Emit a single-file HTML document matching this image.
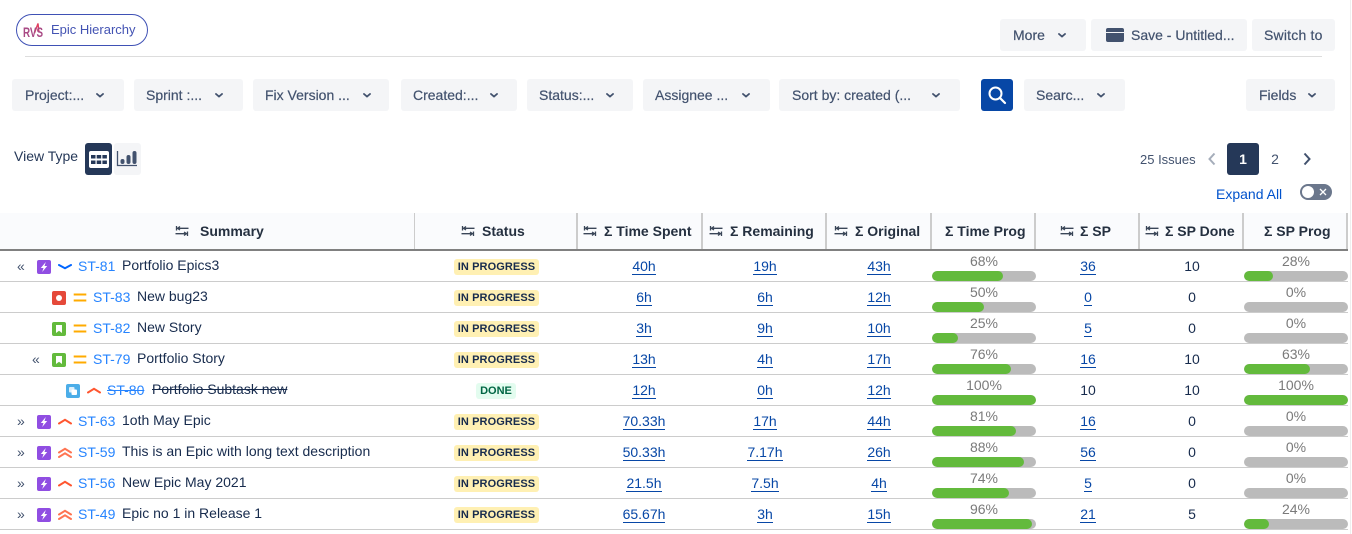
<!DOCTYPE html>
<html><head><meta charset="utf-8"><style>
html,body{margin:0;padding:0;width:1352px;height:534px;overflow:hidden;background:#fff;font-family:"Liberation Sans",sans-serif;color:#172b4d}
.a{position:absolute;white-space:nowrap}
.b{position:absolute;height:32px;line-height:32px;background:#f4f5f7;border-radius:3px;color:#42526e;font-size:14px;white-space:nowrap;box-sizing:border-box;-webkit-text-stroke:.2px #42526e}
.b span{position:absolute;left:13px;top:0}
.b svg{position:absolute;top:14px}
.hd{position:absolute;left:0;top:213px;width:1348px;height:36px;background:#fafbfd}
.hl{position:absolute;left:0;top:249px;width:1348px;height:2px;background:#808080}
.vs{position:absolute;top:213px;height:36px;width:2px;background:#ccc}
.h{position:absolute;top:222px;font-weight:bold;font-size:14px;line-height:18px;color:#253040;white-space:nowrap}
.si{position:absolute;top:225px}
.r{position:absolute;left:0;width:1348px;height:31px;border-bottom:1px solid #ccc;box-sizing:border-box}
.r>*{position:absolute}
.ar{font-size:14px;line-height:18px;top:6px;color:#42526e}
.k{font-size:14px;line-height:18px;top:6px;color:#2684ff;white-space:nowrap}
.s{font-size:14px;line-height:18px;top:5px;color:#172b4d;white-space:nowrap}
.x{text-decoration:line-through}
.ic{top:9px;width:14px;height:14px}
.pr{top:9px;width:14px;height:14px}
.st{left:454px;top:8px;width:85px;height:16px;line-height:16px;background:#fff0b3;border-radius:3px;font-size:11px;font-weight:bold;text-align:center;color:#172b4d;letter-spacing:.1px}
.dn{left:476px;width:40px;background:#e3fcef;color:#006644;letter-spacing:0}
.v{top:7px;width:100px;text-align:center;font-size:14px;line-height:16px;color:#0747a6}
.v span{display:inline-block;border-bottom:1px solid #0747a6}
.t{color:#172b4d}
.c1{left:594px}.c2{left:715px}.c3{left:829px}.c4{left:1038px}.c5{left:1142px}
.p{top:1px;width:104px;text-align:center;font-size:14px;line-height:18px;color:#7a7a7a}
.br{top:20px;width:104px;height:10px;background:#bbb;border-radius:5px;overflow:hidden;z-index:2}
.br i{display:block;height:10px;background:#63ba3c;border-radius:5px}
.q1{left:932px}.q2{left:1244px}
</style></head><body>
<svg width="0" height="0" style="position:absolute"><defs>
<symbol id="ch" viewBox="0 0 8 5"><path d="M1 1l3 2.600L7 1" fill="none" stroke="#42526e" stroke-width="1.800" stroke-linecap="round" stroke-linejoin="round"/></symbol>
<symbol id="so" viewBox="0 0 14 12"><path d="M1.500 1v4.500M1.500 3.300h12M5 1.500L2.500 3.300 5 5M12.500 6.500V11M0.500 8.700h11.500M9 7l2.500 1.700L9 10.500" fill="none" stroke="#3a4658" stroke-width="1.300"/></symbol>
<symbol id="ep" viewBox="0 0 14 14"><rect width="14" height="14" rx="2" fill="#904ee2"/><path d="M8.800 2L3.800 8H6.500L5.200 12 10.200 6H7.500z" fill="#fff"/></symbol>
<symbol id="bg" viewBox="0 0 14 14"><rect width="14" height="14" rx="2" fill="#e5493a"/><circle cx="7" cy="7" r="3" fill="#fff"/></symbol>
<symbol id="sy" viewBox="0 0 14 14"><rect width="14" height="14" rx="2" fill="#63ba3c"/><path d="M4 3h6v8L7 8.800 4 11z" fill="#fff"/></symbol>
<symbol id="sb" viewBox="0 0 14 14"><rect width="14" height="14" rx="2" fill="#4bade8"/><rect x="3" y="3" width="5.500" height="5.500" rx="1" fill="#fff" fill-opacity=".8"/><rect x="5.500" y="5.500" width="5.500" height="5.500" rx="1" fill="#fff"/></symbol>
<symbol id="lo" viewBox="0 0 14 14"><path d="M1 5l6 3.200L13 5" fill="none" stroke="#0065ff" stroke-width="2" stroke-linecap="round"/></symbol>
<symbol id="me" viewBox="0 0 14 14"><path d="M.7 3.500h12.600M.7 9.500h12.600" fill="none" stroke="#ffab00" stroke-width="2"/></symbol>
<symbol id="hi" viewBox="0 0 14 14"><path d="M1 8.500L7 4.800 13 8.500" fill="none" stroke="#ff5630" stroke-width="2" stroke-linecap="round"/></symbol>
<symbol id="hh" viewBox="0 0 14 14"><path d="M1 6.500L7 2.800 13 6.500M1 11L7 7.300 13 11" fill="none" stroke="#ff7452" stroke-width="2" stroke-linecap="round"/></symbol>
</defs></svg>

<div class="a" style="left:16px;top:14px;width:132px;height:32px;border:1px solid #3f51b5;border-radius:16px;box-sizing:border-box"></div>
<svg class="a" style="left:23px;top:22px" width="22" height="17"><path d="M11.500 11L15 1.500l1 9" fill="none" stroke="#e0405f" stroke-width="1.400"/><text x="0" y="15" font-family="Liberation Sans" font-size="14" font-weight="bold" fill="#a94a85" textLength="20" lengthAdjust="spacingAndGlyphs">RVS</text></svg>
<div class="a" style="left:51px;top:21px;font-size:13px;line-height:18px;color:#4353b3">Epic Hierarchy</div>
<div class="a" style="left:25px;top:56px;width:1297px;height:1px;background:#ddd"></div>

<div class="b" style="left:1000px;top:19px;width:86px"><span style="left:13px">More</span><svg style="left:58px" width="8" height="5"><use href="#ch"/></svg></div>
<div class="b" style="left:1091px;top:19px;width:156px"><svg style="left:15px;top:9px" width="18" height="14" viewBox="0 0 18 14"><path d="M2 0h14a2 2 0 012 2v2H0V2a2 2 0 012-2zM0 5h18v7a2 2 0 01-2 2H2a2 2 0 01-2-2z" fill="#42526e"/></svg><span style="left:40px">Save - Untitled...</span></div>
<div class="b" style="left:1252px;top:19px;width:83px"><span style="left:12px;letter-spacing:.2px">Switch to</span></div>

<div class="b" style="left:12px;top:79px;width:112px"><span>Project:...</span><svg style="left:84px" width="8" height="5"><use href="#ch"/></svg></div>
<div class="b" style="left:134px;top:79px;width:109px"><span style="left:12px">Sprint :...</span><svg style="left:81px" width="8" height="5"><use href="#ch"/></svg></div>
<div class="b" style="left:253px;top:79px;width:136px"><span style="left:12px">Fix Version ...</span><svg style="left:110px" width="8" height="5"><use href="#ch"/></svg></div>
<div class="b" style="left:401px;top:79px;width:116px"><span style="left:12px">Created:...</span><svg style="left:89px" width="8" height="5"><use href="#ch"/></svg></div>
<div class="b" style="left:527px;top:79px;width:106px"><span style="left:12px">Status:...</span><svg style="left:79px" width="8" height="5"><use href="#ch"/></svg></div>
<div class="b" style="left:643px;top:79px;width:127px"><span style="left:12px">Assignee ...</span><svg style="left:99px" width="8" height="5"><use href="#ch"/></svg></div>
<div class="b" style="left:779px;top:79px;width:181px"><span>Sort by: created (...</span><svg style="left:153px" width="8" height="5"><use href="#ch"/></svg></div>
<div class="a" style="left:981px;top:79px;width:32px;height:32px;background:#0747a6;border-radius:3px"><svg width="32" height="32"><circle cx="14.500" cy="14.500" r="6" fill="none" stroke="#fff" stroke-width="2"/><path d="M19 19l5 5" stroke="#fff" stroke-width="2.200" stroke-linecap="round"/></svg></div>
<div class="b" style="left:1024px;top:79px;width:101px"><span style="left:12px">Searc...</span><svg style="left:73px" width="8" height="5"><use href="#ch"/></svg></div>
<div class="b" style="left:1246px;top:79px;width:89px"><span>Fields</span><svg style="left:62px" width="8" height="5"><use href="#ch"/></svg></div>

<div class="a" style="left:14px;top:147px;font-size:14px;line-height:18px;color:#253858">View Type</div>
<div class="a" style="left:85px;top:143px;width:27px;height:32px;background:#253858;border-radius:3px"><svg width="27" height="32"><rect x="4" y="8" width="20" height="17" rx="2" fill="#fff"/><path d="M6 12h4.500v3.500H6zM11.700 12h4.500v3.500h-4.500zM17.400 12h4.500v3.500h-4.500zM6 17.500h4.500V21H6zM11.700 17.500h4.500V21h-4.500zM17.400 17.500h4.500V21h-4.500z" fill="#253858"/></svg></div>
<div class="a" style="left:114px;top:143px;width:27px;height:32px;background:#f4f5f7;border-radius:3px"><svg width="27" height="32"><path d="M3.500 8v14.500h19.500" fill="none" stroke="#42526e" stroke-width="1.300"/><rect x="6.500" y="16" width="4" height="5" rx="2" fill="#42526e"/><rect x="12.500" y="12" width="4" height="9" rx="2" fill="#42526e"/><rect x="18.500" y="8" width="4" height="13" rx="2" fill="#42526e"/></svg></div>

<div class="a" style="left:1140px;top:151px;font-size:13px;line-height:17px;color:#42526e">25 Issues</div>
<svg class="a" style="left:1207px;top:152px" width="10" height="14"><path d="M7.500 1.500L2.500 7l5 5.500" fill="none" stroke="#a5adba" stroke-width="2"/></svg>
<div class="a" style="left:1227px;top:143px;width:32px;height:32px;line-height:32px;background:#253858;border-radius:3px;color:#fff;text-align:center;font-size:14px;font-weight:bold">1</div>
<div class="a" style="left:1259px;top:143px;width:32px;height:32px;line-height:32px;color:#42526e;text-align:center;font-size:14px">2</div>
<svg class="a" style="left:1302px;top:152px" width="10" height="14"><path d="M2.500 1.500L7.500 7l-5 5.500" fill="none" stroke="#42526e" stroke-width="2"/></svg>
<div class="a" style="left:1216px;top:185px;font-size:14px;line-height:18px;color:#0052cc">Expand All</div>
<div class="a" style="left:1300px;top:184px;width:32px;height:16px;background:#6b778c;border-radius:8px"><div class="a" style="left:2px;top:2px;width:12px;height:12px;border-radius:6px;background:#fff"></div><svg class="a" style="left:19px;top:4px" width="8" height="8"><path d="M1 1l6 6M7 1L1 7" stroke="#fff" stroke-width="1.300"/></svg></div>

<div class="hd"></div>
<div class="vs" style="left:414px;width:1px"></div><div class="vs" style="left:576px"></div><div class="vs" style="left:701px"></div><div class="vs" style="left:825px"></div><div class="vs" style="left:930px"></div><div class="vs" style="left:1034px"></div><div class="vs" style="left:1138px"></div><div class="vs" style="left:1242px"></div><div class="vs" style="left:1346px"></div>
<svg class="si" style="left:175px" width="14" height="12"><use href="#so"/></svg><div class="h" style="left:200px">Summary</div>
<svg class="si" style="left:461px" width="14" height="12"><use href="#so"/></svg><div class="h" style="left:482px">Status</div>
<svg class="si" style="left:583px" width="14" height="12"><use href="#so"/></svg><div class="h" style="left:604px">Σ Time Spent</div>
<svg class="si" style="left:709px" width="14" height="12"><use href="#so"/></svg><div class="h" style="left:730px">Σ Remaining</div>
<svg class="si" style="left:834px" width="14" height="12"><use href="#so"/></svg><div class="h" style="left:855px">Σ Original</div>
<div class="h" style="left:945px">Σ Time Prog</div>
<svg class="si" style="left:1060px" width="14" height="12"><use href="#so"/></svg><div class="h" style="left:1080px">Σ SP</div>
<svg class="si" style="left:1145px" width="14" height="12"><use href="#so"/></svg><div class="h" style="left:1165px">Σ SP Done</div>
<div class="h" style="left:1264px">Σ SP Prog</div>
<div class="hl"></div>

<div class="r" style="top:251px"><div class="ar" style="left:17px">«</div><svg class="ic" style="left:37px"><use href="#ep" width="14" height="14"/></svg><svg class="pr" style="left:58px"><use href="#lo" width="14" height="14"/></svg><div class="k" style="left:78px">ST-81</div><div class="s" style="left:122px">Portfolio Epics3</div><div class="st">IN PROGRESS</div><div class="v c1"><span>40h</span></div><div class="v c2"><span>19h</span></div><div class="v c3"><span>43h</span></div><div class="p q1">68%</div><div class="br q1"><i style="width:68%"></i></div><div class="v c4"><span>36</span></div><div class="v c5 t">10</div><div class="p q2">28%</div><div class="br q2"><i style="width:28%"></i></div></div>

<div class="r" style="top:282px"><svg class="ic" style="left:52px"><use href="#bg" width="14" height="14"/></svg><svg class="pr" style="left:73px"><use href="#me" width="14" height="14"/></svg><div class="k" style="left:93px">ST-83</div><div class="s" style="left:137px">New bug23</div><div class="st">IN PROGRESS</div><div class="v c1"><span>6h</span></div><div class="v c2"><span>6h</span></div><div class="v c3"><span>12h</span></div><div class="p q1">50%</div><div class="br q1"><i style="width:50%"></i></div><div class="v c4"><span>0</span></div><div class="v c5 t">0</div><div class="p q2">0%</div><div class="br q2"></div></div>

<div class="r" style="top:313px"><svg class="ic" style="left:52px"><use href="#sy" width="14" height="14"/></svg><svg class="pr" style="left:73px"><use href="#me" width="14" height="14"/></svg><div class="k" style="left:93px">ST-82</div><div class="s" style="left:137px">New Story</div><div class="st">IN PROGRESS</div><div class="v c1"><span>3h</span></div><div class="v c2"><span>9h</span></div><div class="v c3"><span>10h</span></div><div class="p q1">25%</div><div class="br q1"><i style="width:25%"></i></div><div class="v c4"><span>5</span></div><div class="v c5 t">0</div><div class="p q2">0%</div><div class="br q2"></div></div>

<div class="r" style="top:344px"><div class="ar" style="left:32px">«</div><svg class="ic" style="left:52px"><use href="#sy" width="14" height="14"/></svg><svg class="pr" style="left:73px"><use href="#me" width="14" height="14"/></svg><div class="k" style="left:93px">ST-79</div><div class="s" style="left:137px">Portfolio Story</div><div class="st">IN PROGRESS</div><div class="v c1"><span>13h</span></div><div class="v c2"><span>4h</span></div><div class="v c3"><span>17h</span></div><div class="p q1">76%</div><div class="br q1"><i style="width:76%"></i></div><div class="v c4"><span>16</span></div><div class="v c5 t">10</div><div class="p q2">63%</div><div class="br q2"><i style="width:63%"></i></div></div>

<div class="r" style="top:375px"><svg class="ic" style="left:66px"><use href="#sb" width="14" height="14"/></svg><svg class="pr" style="left:87px"><use href="#hi" width="14" height="14"/></svg><div class="k x" style="left:107px">ST-80</div><div class="s x" style="left:152px">Portfolio Subtask new</div><div class="st dn">DONE</div><div class="v c1"><span>12h</span></div><div class="v c2"><span>0h</span></div><div class="v c3"><span>12h</span></div><div class="p q1">100%</div><div class="br q1"><i style="width:100%"></i></div><div class="v c4 t">10</div><div class="v c5 t">10</div><div class="p q2">100%</div><div class="br q2"><i style="width:100%"></i></div></div>

<div class="r" style="top:406px"><div class="ar" style="left:17px">»</div><svg class="ic" style="left:37px"><use href="#ep" width="14" height="14"/></svg><svg class="pr" style="left:58px"><use href="#hi" width="14" height="14"/></svg><div class="k" style="left:78px">ST-63</div><div class="s" style="left:122px">1oth May Epic</div><div class="st">IN PROGRESS</div><div class="v c1"><span>70.33h</span></div><div class="v c2"><span>17h</span></div><div class="v c3"><span>44h</span></div><div class="p q1">81%</div><div class="br q1"><i style="width:81%"></i></div><div class="v c4"><span>16</span></div><div class="v c5 t">0</div><div class="p q2">0%</div><div class="br q2"></div></div>

<div class="r" style="top:437px"><div class="ar" style="left:17px">»</div><svg class="ic" style="left:37px"><use href="#ep" width="14" height="14"/></svg><svg class="pr" style="left:58px"><use href="#hh" width="14" height="14"/></svg><div class="k" style="left:78px">ST-59</div><div class="s" style="left:122px">This is an Epic with long text description</div><div class="st">IN PROGRESS</div><div class="v c1"><span>50.33h</span></div><div class="v c2"><span>7.17h</span></div><div class="v c3"><span>26h</span></div><div class="p q1">88%</div><div class="br q1"><i style="width:88%"></i></div><div class="v c4"><span>56</span></div><div class="v c5 t">0</div><div class="p q2">0%</div><div class="br q2"></div></div>

<div class="r" style="top:468px"><div class="ar" style="left:17px">»</div><svg class="ic" style="left:37px"><use href="#ep" width="14" height="14"/></svg><svg class="pr" style="left:58px"><use href="#hi" width="14" height="14"/></svg><div class="k" style="left:78px">ST-56</div><div class="s" style="left:122px">New Epic May 2021</div><div class="st">IN PROGRESS</div><div class="v c1"><span>21.5h</span></div><div class="v c2"><span>7.5h</span></div><div class="v c3"><span>4h</span></div><div class="p q1">74%</div><div class="br q1"><i style="width:74%"></i></div><div class="v c4"><span>5</span></div><div class="v c5 t">0</div><div class="p q2">0%</div><div class="br q2"></div></div>

<div class="r" style="top:499px"><div class="ar" style="left:17px">»</div><svg class="ic" style="left:37px"><use href="#ep" width="14" height="14"/></svg><svg class="pr" style="left:58px"><use href="#hh" width="14" height="14"/></svg><div class="k" style="left:78px">ST-49</div><div class="s" style="left:122px">Epic no 1 in Release 1</div><div class="st">IN PROGRESS</div><div class="v c1"><span>65.67h</span></div><div class="v c2"><span>3h</span></div><div class="v c3"><span>15h</span></div><div class="p q1">96%</div><div class="br q1"><i style="width:96%"></i></div><div class="v c4"><span>21</span></div><div class="v c5 t">5</div><div class="p q2">24%</div><div class="br q2"><i style="width:24%"></i></div></div>

<div class="a" style="left:1350px;top:0;width:1px;height:534px;background:#eee"></div>
</body></html>
